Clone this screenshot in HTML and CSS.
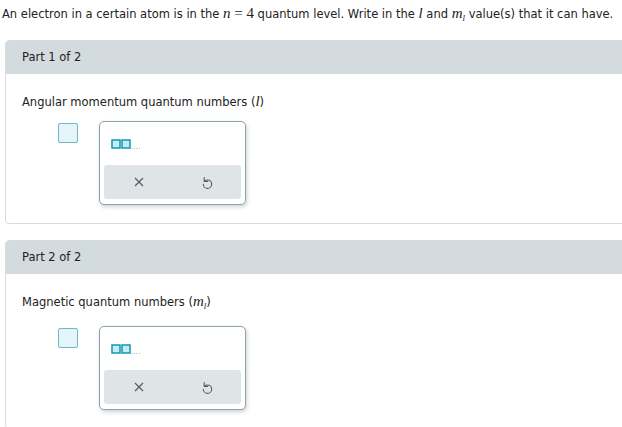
FILE: index.html
```html
<!DOCTYPE html>
<html>
<head>
<meta charset="utf-8">
<link rel="stylesheet" href="styles.css">
</head>
<body>
<p class="question">An electron in a certain atom is in the <span class="math">n</span> <span class="num">= 4</span> quantum level. Write in the <span class="math">l</span> and <span class="math">m<sub>l</sub></span> value(s) that it can have.</p>

<section class="panel">
  <div class="panel-head">Part 1 of 2</div>
  <div class="panel-body">
    <p class="prompt">Angular momentum quantum numbers (<span class="math">l</span>)</p>
    <div class="answer-row">
      <div class="checkbox"></div>
      <div class="popup">
        <div class="popup-top">
          <svg width="32" height="10" viewBox="0 0 32 10">
            <rect x="1" y="1" width="8" height="8" fill="#c5ecf4" stroke="#1596b0" stroke-width="1.5"/>
            <rect x="11" y="1" width="8" height="8" fill="#c5ecf4" stroke="#1596b0" stroke-width="1.5"/>
            <path d="M10.2 8.8 L9.6 10" stroke="#8aa" stroke-width="1"/>
            <circle cx="21" cy="9.2" r="0.55" fill="#8aa"/>
            <circle cx="23.5" cy="9.2" r="0.55" fill="#8aa"/>
            <circle cx="26" cy="9.2" r="0.55" fill="#8aa"/>
            <circle cx="28.5" cy="9.2" r="0.55" fill="#8aa"/>
          </svg>
        </div>
        <div class="popup-actions">
          <svg class="ico" width="12" height="12" viewBox="0 0 12 12"><path d="M2 2 L10 10 M10 2 L2 10" stroke="#4f5f66" stroke-width="1.2" fill="none"/></svg>
          <svg class="ico" width="12" height="13" viewBox="0 0 12 13"><path d="M2.3 8.2 A4.2 4.2 0 1 0 6.5 4 C5.3 4 4.3 4.4 3.4 5.2" stroke="#4f5f66" stroke-width="1.1" fill="none" stroke-linecap="round"/><path d="M3.2 1.6 V5.4 H6.6" stroke="#4f5f66" stroke-width="1.1" fill="none" stroke-linecap="round" stroke-linejoin="round"/></svg>
        </div>
      </div>
    </div>
  </div>
</section>

<section class="panel">
  <div class="panel-head">Part 2 of 2</div>
  <div class="panel-body">
    <p class="prompt prompt-tall">Magnetic quantum numbers (<span class="math">m<sub>l</sub></span>)</p>
    <div class="answer-row">
      <div class="checkbox"></div>
      <div class="popup">
        <div class="popup-top">
          <svg width="32" height="10" viewBox="0 0 32 10">
            <rect x="1" y="1" width="8" height="8" fill="#c5ecf4" stroke="#1596b0" stroke-width="1.5"/>
            <rect x="11" y="1" width="8" height="8" fill="#c5ecf4" stroke="#1596b0" stroke-width="1.5"/>
            <path d="M10.2 8.8 L9.6 10" stroke="#8aa" stroke-width="1"/>
            <circle cx="21" cy="9.2" r="0.55" fill="#8aa"/>
            <circle cx="23.5" cy="9.2" r="0.55" fill="#8aa"/>
            <circle cx="26" cy="9.2" r="0.55" fill="#8aa"/>
            <circle cx="28.5" cy="9.2" r="0.55" fill="#8aa"/>
          </svg>
        </div>
        <div class="popup-actions">
          <svg class="ico" width="12" height="12" viewBox="0 0 12 12"><path d="M2 2 L10 10 M10 2 L2 10" stroke="#4f5f66" stroke-width="1.2" fill="none"/></svg>
          <svg class="ico" width="12" height="13" viewBox="0 0 12 13"><path d="M2.3 8.2 A4.2 4.2 0 1 0 6.5 4 C5.3 4 4.3 4.4 3.4 5.2" stroke="#4f5f66" stroke-width="1.1" fill="none" stroke-linecap="round"/><path d="M3.2 1.6 V5.4 H6.6" stroke="#4f5f66" stroke-width="1.1" fill="none" stroke-linecap="round" stroke-linejoin="round"/></svg>
        </div>
      </div>
    </div>
  </div>
</section>
</body>
</html>
```

FILE: styles.css
```css
html, body {
  margin: 0;
  padding: 0;
  overflow: hidden;
}
body {
  font-family: "DejaVu Sans", Verdana, sans-serif;
  font-size: 11.5px;
  color: #222;
  padding: 0 0 0 2px;
  width: 640px;
}
.question {
  margin: 0;
  padding-top: 6px;
  line-height: 14px;
  height: 34px;
  white-space: nowrap;
}
.math {
  font-family: "Liberation Serif", "Times New Roman", serif;
  font-style: italic;
  font-size: 15px;
}
.num {
  font-family: "Liberation Serif", "Times New Roman", serif;
  font-size: 15px;
}
sub {
  font-size: 9px;
  line-height: 0;
  vertical-align: -3px;
}
.panel {
  margin-left: 3px;
  width: 625px;
  border: 1px solid #d6dde0;
  border-radius: 4px;
  margin-bottom: 16px;
  overflow: hidden;
}
.panel-head {
  background: #d3dbde;
  height: 33px;
  line-height: 33px;
  padding-left: 16px;
  color: #222;
}
.panel-body {
  padding: 19px 16px 18px 16px;
}
.prompt {
  margin: 0;
  line-height: 16px;
}
.prompt-tall {
  padding-bottom: 5px;
}
.answer-row {
  display: flex;
  align-items: flex-start;
  margin-top: 11px;
  padding-left: 36px;
  gap: 21px;
}
.checkbox {
  width: 18px;
  height: 18px;
  margin-top: 2px;
  border: 1.5px solid #6fb8c7;
  border-radius: 2px;
  background: #e4f4f9;
}
.popup {
  width: 137px;
  height: 77px;
  border: 1px solid #8aa3aa;
  border-radius: 5px;
  box-shadow: 1px 2px 4px rgba(0,0,0,0.18);
  background: #fff;
  display: flex;
  flex-direction: column;
  padding: 0 4px 5px 4px;
  box-sizing: content-box;
}
.popup-top {
  flex: 1;
  padding: 17px 0 0 7px;
}
.popup-top svg { display: block; }
.popup-actions {
  height: 34px;
  background: #dfe5e7;
  border-radius: 3px;
  display: flex;
  align-items: center;
  justify-content: center;
  gap: 56px;
}
.ico { display: block; }
```
